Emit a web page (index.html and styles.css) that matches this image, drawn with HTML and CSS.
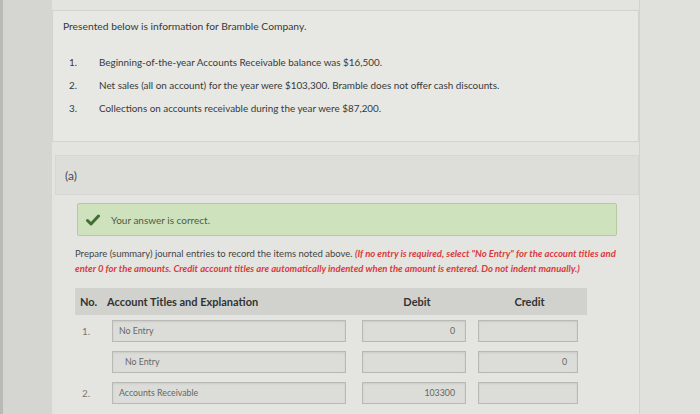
FILE: index.html
```html
<!DOCTYPE html>
<html>
<head>
<meta charset="utf-8">
<link rel="stylesheet" href="styles.css">
</head>
<body>
<div class="screen">
  <div class="gutter"></div>
  <div class="main">
    <section class="intro">
      <p class="intro-title">Presented below is information for Bramble Company.</p>
      <ol class="facts">
        <li><span class="num">1.</span><span>Beginning-of-the-year Accounts Receivable balance was $16,500.</span></li>
        <li><span class="num">2.</span><span>Net sales (all on account) for the year were $103,300. Bramble does not offer cash discounts.</span></li>
        <li><span class="num">3.</span><span>Collections on accounts receivable during the year were $87,200.</span></li>
      </ol>
    </section>
    <section class="part">
      <div class="part-head">(a)</div>
      <div class="part-body">
        <div class="correct">
          <svg class="check" width="14" height="12" viewBox="0 0 14 12"><path d="M1.5 6.5 L5 10 L12.5 2" fill="none" stroke="#3f6f32" stroke-width="3" stroke-linecap="round" stroke-linejoin="round"/></svg>
          <span>Your answer is correct.</span>
        </div>
        <p class="instr">Prepare (summary) journal entries to record the items noted above. <em class="red">(If no entry is required, select "No Entry" for the account titles and<br>enter 0 for the amounts. Credit account titles are automatically indented when the amount is entered. Do not indent manually.)</em></p>
        <div class="table">
          <div class="thead">
            <div class="c-no">No.</div>
            <div class="c-acct">Account Titles and Explanation</div>
            <div class="c-deb center">Debit</div>
            <div class="c-cred center">Credit</div>
          </div>
          <div class="row">
            <div class="c-no rn">1.</div>
            <div class="c-acct"><div class="inp acct">No Entry</div></div>
            <div class="c-deb"><div class="inp amt">0</div></div>
            <div class="c-cred"><div class="inp amt"></div></div>
          </div>
          <div class="row">
            <div class="c-no rn"></div>
            <div class="c-acct"><div class="inp acct indent">No Entry</div></div>
            <div class="c-deb"><div class="inp amt"></div></div>
            <div class="c-cred"><div class="inp amt">0</div></div>
          </div>
          <div class="row">
            <div class="c-no rn">2.</div>
            <div class="c-acct"><div class="inp acct">Accounts Receivable</div></div>
            <div class="c-deb"><div class="inp amt">103300</div></div>
            <div class="c-cred"><div class="inp amt"></div></div>
          </div>
        </div>
      </div>
    </section>
  </div>
  <div class="side"></div>
</div>
</body>
</html>
```

FILE: styles.css
```css
* { box-sizing: border-box; }
html, body { margin: 0; padding: 0; }
body {
  width: 700px;
  height: 414px;
  overflow: hidden;
  background: #d6d7d2;
  font-family: Lato, "Open Sans", sans-serif;
  color: #383838;
}
.screen {
  display: flex;
  height: 414px;
  overflow: hidden;
}
.gutter {
  width: 52px;
  flex: none;
  background: #d5d6d1;
  border-left: 3px solid #b9bab5;
}
.main {
  width: 587px;
  flex: none;
  background: #e3e4df;
  padding-top: 10px;
  overflow: hidden;
}
.side {
  flex: 1;
  background: #e0e1dc;
  border-left: 1px solid #d2d3ce;
}
.intro {
  height: 132px;
  border: 1px solid #d2d3ce;
  background: #e7e8e3;
  padding: 8px 10px 0;
}
.intro-title {
  margin: 0 0 17px;
  font-size: 10.3px;
  line-height: 14px;
}
.facts {
  list-style: none;
  margin: 0;
  padding: 0 0 0 6px;
  font-size: 9.9px;
}
.facts li {
  display: flex;
  height: 23px;
  align-items: center;
}
.facts .num { width: 30px; flex: none; }
.part {
  margin-top: 13px;
  margin-left: 3px;
}
.part-head {
  height: 40px;
  background: #dddeda;
  border: 1px solid #d6d7d2;
  padding-left: 9px;
  display: flex;
  align-items: center;
  font-size: 12px;
  color: #4a4a4a;
}
.part-body {
  padding: 8px 0 0 22px;
  background: #e4e5e0;
  height: 219px;
}
.correct {
  width: 540px;
  height: 33px;
  background: #cde2bd;
  border: 1px solid #b4caa2;
  border-radius: 2px;
  display: flex;
  align-items: center;
  padding-left: 8px;
  font-size: 10px;
  color: #4f5a4a;
}
.check { margin-right: 11px; }
.instr {
  margin: 10px 0 0 -2px;
  font-size: 9.5px;
  line-height: 15px;
  color: #444;
}
.red {
  color: #d93a3f;
  font-weight: 700;
  font-style: italic;
}
.table {
  margin-top: 12px;
  margin-left: -2px;
  width: 512px;
}
.thead {
  display: flex;
  align-items: center;
  height: 27px;
  background: #d1d2cd;
  font-weight: 700;
  font-size: 11px;
  color: #333;
}
.c-no { width: 32px; flex: none; padding-left: 5px; }
.c-acct { width: 247px; flex: none; }
.c-deb { width: 118px; flex: none; }
.c-cred { width: 115px; flex: none; }
.center { text-align: center; }
.thead .c-deb { padding-left: 8px; }
.row {
  display: flex;
  align-items: center;
  height: 31px;
}
.row:first-of-type { margin-top: 2px; }
.rn { font-size: 9.8px; color: #777; padding-left: 7px; }
.inp {
  height: 22px;
  background: #dcddd8;
  border: 1px solid #b8b9b4;
  box-shadow: inset 0 1px 2px rgba(0,0,0,0.08);
  font-size: 8.8px;
  color: #666;
  display: flex;
  align-items: center;
}
.acct { width: 234px; margin-left: 5px; padding-left: 6px; }
.indent { padding-left: 12px; }
.amt { justify-content: flex-end; padding-right: 10px; margin-left: 8px; width: 104px; }
.c-cred .amt { margin-left: 6px; width: 100px; }
```
